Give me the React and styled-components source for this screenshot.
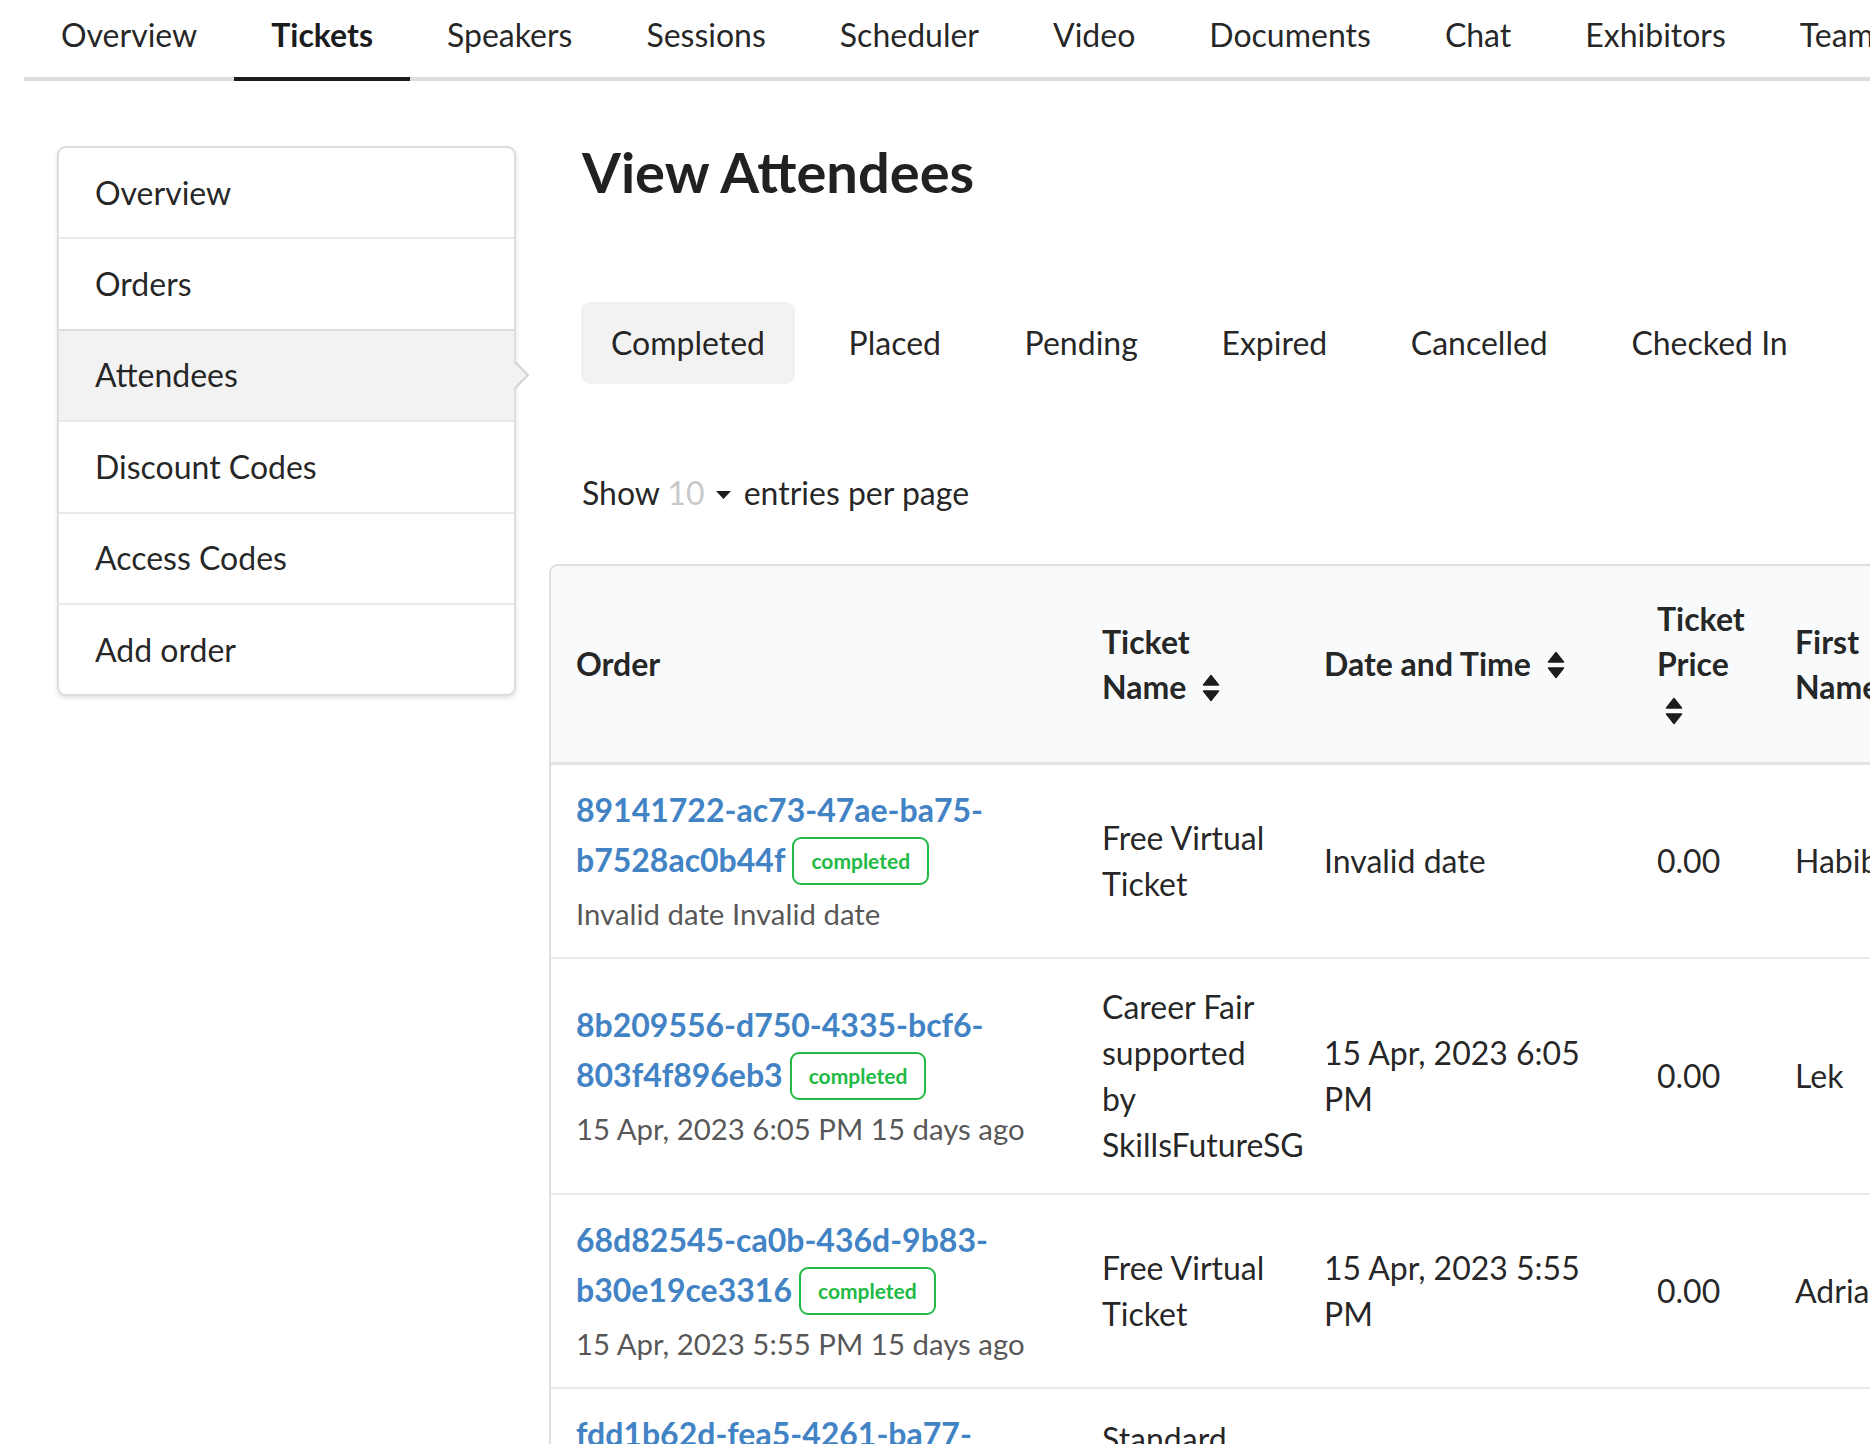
import React, { useState } from "react";
import styled, { createGlobalStyle } from "styled-components";

const GlobalStyle = createGlobalStyle`
  html, body {
    margin: 0;
    padding: 0;
    overflow: hidden;
    background: #ffffff;
  }
  body {
    font-family: Lato, "Open Sans", "Liberation Sans", sans-serif;
    font-size: 32px;
    color: rgba(0, 0, 0, 0.87);
  }
  * {
    box-sizing: border-box;
  }
`;

const topTabs = ["Overview", "Tickets", "Speakers", "Sessions", "Scheduler", "Video", "Documents", "Chat", "Exhibitors", "Team", "Settings"];
const sideItems = ["Overview", "Orders", "Attendees", "Discount Codes", "Access Codes", "Add order"];
const statusTabs = ["Completed", "Placed", "Pending", "Expired", "Cancelled", "Checked In"];

const rows = [
  {
    id: "89141722-ac73-47ae-ba75-b7528ac0b44f",
    meta: "Invalid date Invalid date",
    ticket: "Free Virtual Ticket",
    date: "Invalid date",
    price: "0.00",
    first: "Habib",
    last: "Rahman"
  },
  {
    id: "8b209556-d750-4335-bcf6-803f4f896eb3",
    meta: "15 Apr, 2023 6:05 PM 15 days ago",
    ticket: "Career Fair supported by SkillsFutureSG",
    date: "15 Apr, 2023 6:05 PM",
    price: "0.00",
    first: "Lek",
    last: "Tan"
  },
  {
    id: "68d82545-ca0b-436d-9b83-b30e19ce3316",
    meta: "15 Apr, 2023 5:55 PM 15 days ago",
    ticket: "Free Virtual Ticket",
    date: "15 Apr, 2023 5:55 PM",
    price: "0.00",
    first: "Adrian",
    last: "Lim"
  },
  {
    id: "fdd1b62d-fea5-4261-ba77-5c1e0a3f9d21",
    meta: "15 Apr, 2023 5:40 PM 15 days ago",
    ticket: "Standard Physical Ticket",
    date: "15 Apr, 2023 5:40 PM",
    price: "0.00",
    first: "Mei",
    last: "Ong"
  }
];

const SortIcon = () => (
  <SortSvg viewBox="0 0 18 28" aria-hidden="true">
    <path d="M9 1.5 L16.5 11 H1.5 Z" />
    <path d="M1.5 17 H16.5 L9 26.5 Z" />
  </SortSvg>
);

const Caret = () => (
  <CaretSvg viewBox="0 0 17 10" aria-hidden="true">
    <path d="M1 1 H16 L8.5 9 Z" />
  </CaretSvg>
);

// break the order id after its last hyphen, like the wrapped link in the list
const splitId = (id) => {
  const idx = id.lastIndexOf("-");
  return [id.slice(0, idx + 1), id.slice(idx + 1)];
};

const App = () => {
  const [topTab, setTopTab] = useState("Tickets");
  const [sideItem, setSideItem] = useState("Attendees");
  const [status, setStatus] = useState("Completed");

  return (
    <Page>
      <GlobalStyle />
      <TopNav>
        {topTabs.map((t) => (
          <TopTab key={t} $active={t === topTab} onClick={() => setTopTab(t)}>{t}</TopTab>
        ))}
      </TopNav>
      <Body>
        <Sidebar>
          {sideItems.map((s) => (
            <SideItem key={s} $active={s === sideItem} onClick={() => setSideItem(s)}>{s}</SideItem>
          ))}
        </Sidebar>
        <Main>
          <Heading>View Attendees</Heading>
          <StatusMenu>
            {statusTabs.map((s) => (
              <StatusTab key={s} $active={s === status} onClick={() => setStatus(s)}>{s}</StatusTab>
            ))}
          </StatusMenu>
          <EntriesLine>
            Show <Dropdown>10<Caret /></Dropdown>entries per page
          </EntriesLine>
          <Table>
            <colgroup>
              <col style={{ width: 526 }} />
              <col style={{ width: 222 }} />
              <col style={{ width: 333 }} />
              <col style={{ width: 138 }} />
              <col style={{ width: 170 }} />
              <col style={{ width: 200 }} />
              <col style={{ width: 380 }} />
            </colgroup>
            <thead>
              <tr>
                <HeadCell>Order</HeadCell>
                <HeadCell>Ticket Name <SortIcon /></HeadCell>
                <HeadCell>Date and Time <SortIcon /></HeadCell>
                <HeadCell>Ticket Price <SortIcon /></HeadCell>
                <HeadCell>First Name <SortIcon /></HeadCell>
                <HeadCell>Last Name <SortIcon /></HeadCell>
                <HeadCell>Email <SortIcon /></HeadCell>
              </tr>
            </thead>
            <tbody>
              {rows.map((r) => {
                const [head, tail] = splitId(r.id);
                return (
                  <Row key={r.id}>
                    <OrderCell>
                      <OrderTitle>
                        <OrderLink href="#">{head}<br />{tail}</OrderLink>
                        <StatusLabel>completed</StatusLabel>
                      </OrderTitle>
                      <OrderMeta>{r.meta}</OrderMeta>
                    </OrderCell>
                    <Cell>{r.ticket}</Cell>
                    <Cell>{r.date}</Cell>
                    <Cell>{r.price}</Cell>
                    <Cell>{r.first}</Cell>
                    <Cell>{r.last}</Cell>
                    <Cell>{r.first.toLowerCase()}@example.com</Cell>
                  </Row>
                );
              })}
            </tbody>
          </Table>
        </Main>
      </Body>
    </Page>
  );
};

export default App;

const Page = styled.div`
  padding-left: 24px;
  width: max-content;
`;

const TopNav = styled.nav`
  display: flex;
  white-space: nowrap;
  border-bottom: 4px solid #dedede;
`;

const TopTab = styled.a`
  display: block;
  padding: 19px 37px 26px;
  line-height: 32px;
  font-size: 32px;
  color: ${({ $active }) => ($active ? "#1b1c1d" : "rgba(0, 0, 0, 0.87)")};
  font-weight: ${({ $active }) => ($active ? 700 : 400)};
  border-bottom: 4px solid ${({ $active }) => ($active ? "#1b1c1d" : "transparent")};
  margin-bottom: -4px;
  cursor: pointer;
`;

const Body = styled.div`
  display: flex;
  align-items: flex-start;
  padding: 55px 0 0 33px;
`;

const Sidebar = styled.div`
  flex: none;
  width: 459px;
  margin-top: 10px;
  border: 2px solid rgba(34, 36, 38, 0.15);
  border-radius: 9px;
  box-shadow: 0 2px 4px 0 rgba(34, 36, 38, 0.15);
  background: #ffffff;
`;

const SideItem = styled.a`
  position: relative;
  display: block;
  padding: 28.7px 36px;
  line-height: 32px;
  font-size: 32px;
  color: rgba(0, 0, 0, 0.87);
  cursor: pointer;
  background: ${({ $active }) => ($active ? "#f2f2f2" : "transparent")};
  & + & {
    border-top: 2px solid rgba(34, 36, 38, 0.1);
  }
  &:first-child {
    border-radius: 7px 7px 0 0;
  }
  &:last-child {
    border-radius: 0 0 7px 7px;
  }
  &::after {
    content: "";
    display: ${({ $active }) => ($active ? "block" : "none")};
    position: absolute;
    top: 50%;
    right: 0;
    width: 17px;
    height: 17px;
    background: #f2f2f2;
    border-top: 2px solid rgba(34, 36, 38, 0.15);
    border-right: 2px solid rgba(34, 36, 38, 0.15);
    transform: translateX(50%) translateY(-50%) rotate(45deg);
    margin-right: -2px;
    z-index: 2;
  }
`;

const Main = styled.div`
  flex: none;
  margin-left: 33px;
`;

const Heading = styled.h2`
  margin: 0;
  padding-left: 33px;
  font-size: 56px;
  line-height: 71px;
  font-weight: 700;
  color: rgba(0, 0, 0, 0.87);
`;

const StatusMenu = styled.div`
  display: flex;
  gap: 23.6px;
  margin-top: 95px;
  padding-left: 32px;
`;

const StatusTab = styled.a`
  display: block;
  padding: 25px 30px;
  line-height: 32px;
  font-size: 32px;
  border-radius: 9px;
  color: rgba(0, 0, 0, 0.87);
  background: ${({ $active }) => ($active ? "rgba(0, 0, 0, 0.05)" : "transparent")};
  cursor: pointer;
`;

const EntriesLine = styled.div`
  margin-top: 86px;
  padding-left: 33px;
  line-height: 46px;
  font-size: 32px;
  color: rgba(0, 0, 0, 0.87);
`;

const Dropdown = styled.span`
  display: inline-flex;
  align-items: center;
  color: rgba(191, 191, 191, 0.87);
`;

const CaretSvg = styled.svg`
  width: 17px;
  height: 10px;
  margin: 4px 12px 0 10px;
  fill: #1b1c1d;
`;

const Table = styled.table`
  margin-top: 48px;
  table-layout: fixed;
  width: 1969px;
  border-collapse: separate;
  border-spacing: 0;
  border: 2px solid rgba(34, 36, 38, 0.15);
  border-radius: 9px;
  font-size: 32px;
`;

const HeadCell = styled.th`
  text-align: left;
  vertical-align: middle;
  padding: 29.7px 25px;
  line-height: 45.7px;
  font-weight: 700;
  color: rgba(0, 0, 0, 0.87);
  background: #f9fafb;
  border-bottom: 3px solid rgba(34, 36, 38, 0.1);
  &:first-child {
    border-top-left-radius: 7px;
  }
`;

const SortSvg = styled.svg`
  width: 18px;
  height: 28px;
  margin-left: 8px;
  vertical-align: -3px;
  fill: #1b1c1d;
  stroke: #1b1c1d;
  stroke-width: 1.5;
  stroke-linejoin: round;
`;

const Row = styled.tr`
  & + & td {
    border-top: 2px solid rgba(34, 36, 38, 0.1);
  }
`;

const Cell = styled.td`
  vertical-align: middle;
  padding: 25px;
  line-height: 46px;
  color: rgba(0, 0, 0, 0.87);
`;

const OrderCell = styled(Cell)`
  padding: 20px 25px;
`;

const OrderTitle = styled.div`
  line-height: 50px;
`;

const OrderLink = styled.a`
  color: #4183c4;
  font-weight: 700;
  text-decoration: none;
`;

const StatusLabel = styled.span`
  display: inline-block;
  margin-left: 7px;
  padding: 11.5px 17px;
  font-size: 21px;
  line-height: 21px;
  font-weight: 700;
  color: #21ba45;
  border: 2px solid #21ba45;
  border-radius: 9px;
  vertical-align: 3px;
`;

const OrderMeta = styled.div`
  margin-top: 6px;
  font-size: 29.4px;
  line-height: 46px;
  color: rgba(0, 0, 0, 0.68);
`;
